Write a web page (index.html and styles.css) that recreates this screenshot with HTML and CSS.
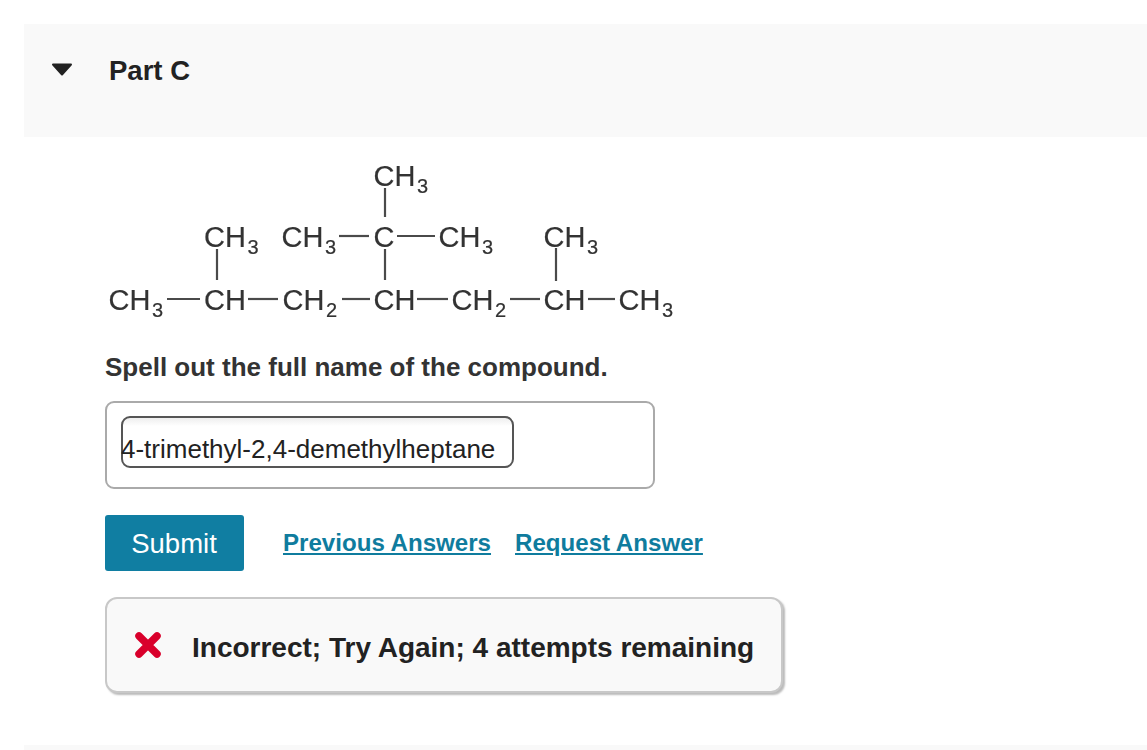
FILE: index.html
```html
<!DOCTYPE html>
<html lang="en">
<head>
<meta charset="utf-8">
<title>Part C</title>
<link rel="stylesheet" href="styles.css">
</head>
<body>
<main class="page">
  <header class="part-head">
    <svg class="caret" viewBox="0 0 22 13" aria-hidden="true"><path d="M2 1.5H20L11 11.5Z" fill="#222" stroke="#222" stroke-width="2" stroke-linejoin="round"/></svg>
    <h2 class="part-title">Part C</h2>
  </header>
  <section class="part-body">
    <svg class="formula" viewBox="105 137 600 205" aria-label="Condensed structural formula">
      <g class="bonds">
        <line x1="385" y1="188" x2="385" y2="217"/>
        <line x1="217" y1="249" x2="217" y2="280"/>
        <line x1="385" y1="249" x2="385" y2="280"/>
        <line x1="556" y1="248" x2="556" y2="281"/>
        <line x1="339" y1="236" x2="369" y2="236"/>
        <line x1="397" y1="236" x2="435" y2="236"/>
        <line x1="167" y1="299" x2="200" y2="299"/>
        <line x1="248" y1="299" x2="278" y2="299"/>
        <line x1="342" y1="299" x2="370" y2="299"/>
        <line x1="417" y1="299" x2="448" y2="299"/>
        <line x1="510" y1="299" x2="540" y2="299"/>
        <line x1="588" y1="299" x2="615" y2="299"/>
      </g>
      <g class="atoms">
        <text x="373.5" y="186">CH<tspan class="sub" dx="1.5" dy="7">3</tspan></text>
        <text x="204" y="247">CH<tspan class="sub" dx="1.5" dy="7">3</tspan></text>
        <text x="281.5" y="247">CH<tspan class="sub" dx="1.5" dy="7">3</tspan></text>
        <text x="373.5" y="247">C</text>
        <text x="438.5" y="247">CH<tspan class="sub" dx="1.5" dy="7">3</tspan></text>
        <text x="543.5" y="247">CH<tspan class="sub" dx="1.5" dy="7">3</tspan></text>
        <text x="108.5" y="309.5">CH<tspan class="sub" dx="1.5" dy="7">3</tspan></text>
        <text x="204" y="309.5">CH</text>
        <text x="282.5" y="309.5">CH<tspan class="sub" dx="1.5" dy="7">2</tspan></text>
        <text x="373.5" y="309.5">CH</text>
        <text x="451.5" y="309.5">CH<tspan class="sub" dx="1.5" dy="7">2</tspan></text>
        <text x="543.5" y="309.5">CH</text>
        <text x="618.5" y="309.5">CH<tspan class="sub" dx="1.5" dy="7">3</tspan></text>
      </g>
    </svg>
    <p class="prompt">Spell out the full name of the compound.</p>
    <div class="answer-box">
      <div class="answer-field"><span class="answer-text">4-trimethyl-2,4-demethylheptane</span></div>
    </div>
    <div class="actions">
      <button class="submit" type="button">Submit</button>
      <a class="link" href="#">Previous Answers</a>
      <a class="link" href="#">Request Answer</a>
    </div>
    <div class="feedback">
      <svg class="cross" viewBox="0 0 28 28" aria-hidden="true"><path d="M5 5L23 23M23 5L5 23" fill="none" stroke="#d9002b" stroke-width="7.5" stroke-linecap="round"/></svg>
      <span class="feedback-text">Incorrect; Try Again; 4 attempts remaining</span>
    </div>
  </section>
  <div class="next-part"></div>
</main>
</body>
</html>
```
FILE: styles.css
```css
* { box-sizing: border-box; }
html, body { margin: 0; height: 100%; overflow: hidden; background: #fff; }
body { font-family: "Liberation Sans", Arial, sans-serif; color: #222; }
.page { padding: 24px 0 0 24px; width: 1147px; height: 750px; overflow: hidden; }
.part-head {
  display: flex; align-items: flex-start; height: 113px; background: #f9f9f9;
  padding: 30px 0 0 27px;
}
.caret { width: 22px; height: 13px; margin-top: 9px; }
.part-title { margin: 0 0 0 36px; font-size: 27.5px; line-height: 33px; font-weight: 700; color: #222; }
.part-body { padding-left: 81px; }
.formula { display: block; width: 600px; height: 205px; filter: blur(0.45px); }
.bonds line { stroke: #4a4a4a; stroke-width: 2.2; }
.atoms text { font-family: "Liberation Sans", Arial, sans-serif; font-size: 29px; fill: #333; stroke: #333; stroke-width: 0.2px; }
.atoms .sub { font-size: 20px; }
.prompt { margin: 9px 0 0; font-size: 26px; line-height: 33px; font-weight: 700; color: #333; }
.answer-box {
  width: 550px; height: 88px; margin-top: 17px; padding: 13px 0 0 14px;
  border: 2px solid #aaa; border-radius: 9px; background: #fff;
}
.answer-field {
  width: 393px; height: 52px; border: 2px solid #555; border-radius: 9px;
  background: linear-gradient(#eee, #fff 8px); line-height: 62px; white-space: nowrap;
}
.answer-text { display: block; margin-left: -2px; font-size: 26px; color: #222; }
.actions { display: flex; align-items: center; margin-top: 26px; }
.submit {
  width: 139px; height: 56px; padding: 2px 1px 0 0; border: 0; border-radius: 3px;
  background: #107ea2; color: #fff; font: 400 27.5px "Liberation Sans", Arial, sans-serif;
}
.link { font-size: 24.1px; font-weight: 700; color: #0f7c9e; text-decoration: underline; margin-left: 39px; }
.link + .link { margin-left: 24px; }
.feedback {
  display: flex; align-items: center; width: 678px; height: 96px; margin-top: 26px; padding-left: 27px;
  border: 2px solid #c8c8c8; border-radius: 12px; background: #f9f9f9; box-shadow: 2px 2px 2px #bbb;
}
.cross { width: 28px; height: 28px; flex: none; }
.feedback-text { margin-left: 30px; padding-top: 5px; font-size: 28px; font-weight: 700; color: #222; white-space: nowrap; }
.next-part { height: 20px; margin-top: 52px; background: #f9f9f9; }
```
